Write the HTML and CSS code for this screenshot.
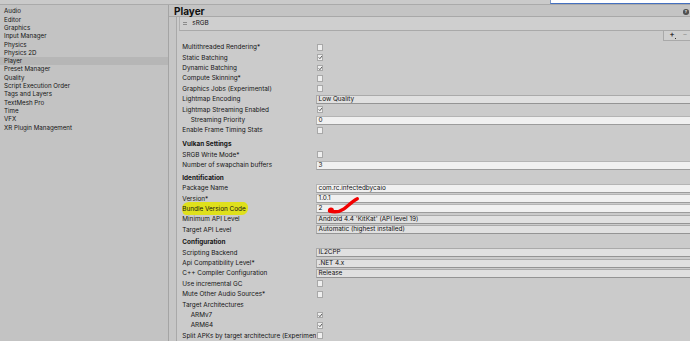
FILE: index.html
```html
<!DOCTYPE html>
<html>
<head>
<meta charset="utf-8">
<link rel="stylesheet" href="styles.css">
</head>
<body>
<div class="top"><div class="search"></div></div>
<div class="main">
  <aside class="side">
    <ul>
      <li>Audio</li>
      <li>Editor</li>
      <li>Graphics</li>
      <li>Input Manager</li>
      <li>Physics</li>
      <li>Physics 2D</li>
      <li class="sel">Player</li>
      <li>Preset Manager</li>
      <li>Quality</li>
      <li>Script Execution Order</li>
      <li>Tags and Layers</li>
      <li>TextMesh Pro</li>
      <li>Time</li>
      <li>VFX</li>
      <li>XR Plugin Management</li>
    </ul>
  </aside>
  <section class="insp">
    <header class="head"><h1>Player</h1><span class="help">?</span></header>
    <div class="body">
      <div class="gutter"></div>
      <div class="content">
        <div class="list"><span class="handle"></span>sRGB</div>
        <div class="listfoot"><span class="plus">+<i></i></span><span class="minus">−</span></div>
        <div class="props">
          <div class="row"><span class="lbl">Multithreaded Rendering*</span><span class="cb"></span></div>
          <div class="row"><span class="lbl">Static Batching</span><span class="cb"><svg viewBox="0 0 6 6"><polyline points="1.2,3.2 2.4,4.4 4.8,1.4"/></svg></span></div>
          <div class="row"><span class="lbl">Dynamic Batching</span><span class="cb"><svg viewBox="0 0 6 6"><polyline points="1.2,3.2 2.4,4.4 4.8,1.4"/></svg></span></div>
          <div class="row"><span class="lbl">Compute Skinning*</span><span class="cb"></span></div>
          <div class="row"><span class="lbl">Graphics Jobs (Experimental)</span><span class="cb"></span></div>
          <div class="row"><span class="lbl">Lightmap Encoding</span><span class="field drop">Low Quality</span></div>
          <div class="row"><span class="lbl">Lightmap Streaming Enabled</span><span class="cb"><svg viewBox="0 0 6 6"><polyline points="1.2,3.2 2.4,4.4 4.8,1.4"/></svg></span></div>
          <div class="row ind"><span class="lbl">Streaming Priority</span><span class="field">0</span></div>
          <div class="row"><span class="lbl">Enable Frame Timing Stats</span><span class="cb"></span></div>
          <div class="row sec big"><span class="lbl">Vulkan Settings</span></div>
          <div class="row"><span class="lbl">SRGB Write Mode*</span><span class="cb"></span></div>
          <div class="row"><span class="lbl">Number of swapchain buffers</span><span class="field">3</span></div>
          <div class="row sec"><span class="lbl">Identification</span></div>
          <div class="row"><span class="lbl">Package Name</span><span class="field">com.rc.infectedbycaio</span></div>
          <div class="row"><span class="lbl">Version*</span><span class="field">1.0.1</span></div>
          <div class="row mark"><span class="hl"></span><span class="lbl">Bundle Version Code</span><span class="field">2</span>
            <svg class="arrow" viewBox="0 0 34 18" width="34" height="18"><ellipse cx="4" cy="13.2" rx="2.9" ry="2.6"/><path d="M2.5 13.8 C7 15.5, 13 14.5, 17 11.8 S25 4.5, 30.3 1.8"/></svg>
          </div>
          <div class="row"><span class="lbl">Minimum API Level</span><span class="field drop">Android 4.4 'KitKat' (API level 19)</span></div>
          <div class="row"><span class="lbl">Target API Level</span><span class="field drop">Automatic (highest installed)</span></div>
          <div class="row sec"><span class="lbl">Configuration</span></div>
          <div class="row"><span class="lbl">Scripting Backend</span><span class="field drop">IL2CPP</span></div>
          <div class="row"><span class="lbl">Api Compatibility Level*</span><span class="field drop">.NET 4.x</span></div>
          <div class="row"><span class="lbl">C++ Compiler Configuration</span><span class="field drop">Release</span></div>
          <div class="row"><span class="lbl">Use incremental GC</span><span class="cb"></span></div>
          <div class="row"><span class="lbl">Mute Other Audio Sources*</span><span class="cb"></span></div>
          <div class="row"><span class="lbl">Target Architectures</span></div>
          <div class="row ind"><span class="lbl">ARMv7</span><span class="cb"><svg viewBox="0 0 6 6"><polyline points="1.2,3.2 2.4,4.4 4.8,1.4"/></svg></span></div>
          <div class="row ind"><span class="lbl">ARM64</span><span class="cb"><svg viewBox="0 0 6 6"><polyline points="1.2,3.2 2.4,4.4 4.8,1.4"/></svg></span></div>
          <div class="row"><span class="lbl">Split APKs by target architecture (Experimental)</span><span class="cb"></span></div>
        </div>
      </div>
    </div>
  </section>
</div>
</body>
</html>
```
FILE: styles.css
```css
* { box-sizing: border-box; }
html, body { margin: 0; padding: 0; }
body {
  width: 690px;
  height: 341px;
  overflow: hidden;
  font-family: Inter, "Noto Sans", sans-serif;
  color: #151515;
  background: #cbcbcb;
}
.top {
  height: 5px;
  background: #cacaca;
  border-bottom: 1px solid #aaaaaa;
  display: flex;
  justify-content: flex-end;
}
.search {
  width: 140px;
  height: 4px;
  background: #ffffff;
  border-left: 1px solid #7d97c4;
  border-bottom: 1px solid #4470c0;
}
.main {
  display: flex;
  height: 336px;
}
.side {
  width: 169px;
  flex: none;
  background: #c3c3c3;
  border-right: 1px solid #a4a4a4;
  padding-top: 2.2px;
}
.side ul { list-style: none; margin: 0; padding: 0; }
.side li {
  height: 8.33px;
  line-height: 8.33px;
  padding-left: 4px;
  font-size: 6.2px;
  white-space: nowrap;
}
.side li.sel { background: #b6b6b6; }
.insp {
  flex: 1;
  min-width: 0;
  display: flex;
  flex-direction: column;
}
.head {
  height: 12px;
  flex: none;
  background: #c4c4c4;
  border-bottom: 1px solid #a8a8a8;
  display: flex;
  align-items: center;
  justify-content: space-between;
  padding: 0 1.5px 0 5px;
}
.head h1 {
  margin: 0;
  font-size: 10px;
  font-weight: 700;
  line-height: 1;
  color: #111;
}
.help {
  width: 5.5px;
  height: 5.5px;
  border-radius: 50%;
  background: #505050;
  color: #e8e8e8;
  font-size: 4px;
  font-weight: 700;
  line-height: 5.5px;
  text-align: center;
  align-self: flex-end;
  margin-bottom: 1.5px;
}
.body {
  flex: 1;
  display: flex;
  min-height: 0;
}
.gutter {
  width: 8px;
  flex: none;
  background: #c6c6c6;
  border-right: 1px solid #a9a9a9;
}
.content {
  flex: 1;
  min-width: 0;
  display: flex;
  flex-direction: column;
  background: #cbcbcb;
}
.list {
  margin-left: 2px;
  height: 13.5px;
  flex: none;
  background: #cfcfcf;
  border-left: 1px solid #b0b0b0;
  border-bottom: 1px solid #a9a9a9;
  display: flex;
  align-items: center;
  padding-left: 3px;
  font-size: 6.4px;
}
.handle {
  width: 4px;
  height: 2.6px;
  border-top: 0.8px solid #8c8c8c;
  border-bottom: 0.8px solid #8c8c8c;
  margin-right: 5.3px;
}
.listfoot {
  align-self: flex-end;
  width: 27px;
  height: 10px;
  flex: none;
  background: #cfcfcf;
  border-left: 1px solid #a9a9a9;
  border-bottom: 1px solid #a9a9a9;
  display: flex;
  align-items: center;
  padding-left: 5.5px;
  gap: 8px;
  font-size: 7.5px;
  line-height: 1;
}
.plus { font-weight: 700; color: #333; position: relative; }
.plus i {
  position: absolute;
  right: -1.5px;
  bottom: 0;
  width: 1.2px;
  height: 1.2px;
  background: #333;
}
.minus { color: #8f8f8f; }
.props {
  margin-top: 1.6px;
  padding-left: 5.3px;
}
.row {
  display: grid;
  grid-template-columns: 133.7px 1fr;
  height: 10.4px;
  align-items: center;
  font-size: 6.4px;
  position: relative;
}
.lbl {
  white-space: nowrap;
  overflow: hidden;
  position: relative;
}
.ind .lbl { padding-left: 8.4px; }
.sec { font-weight: 700; margin-top: 2.2px; }
.sec.big { margin-top: 3.6px; }
.field {
  height: 9px;
  line-height: 7px;
  border: 1px solid #b4b4b4;
  border-right: none;
  border-bottom-color: #9c9c9c;
  padding-left: 1.6px;
  background: #f0f0f0;
  white-space: nowrap;
  overflow: hidden;
  margin-right: -6px;
  color: #111;
}
.field.drop {
  background: #e0e0e0;
  border-color: #aaaaaa;
  border-bottom-color: #949494;
}
.cb {
  width: 6.8px;
  height: 6.8px;
  margin-left: 0.7px;
  border: 1px solid #a8a8a8;
  background: #efefef;
  display: flex;
  align-items: center;
  justify-content: center;
}
.cb svg { width: 5px; height: 5px; display: block; }
.cb polyline { fill: none; stroke: #1d1d1d; stroke-width: 0.9; stroke-linecap: round; stroke-linejoin: round; }
.hl {
  position: absolute;
  left: -0.8px;
  top: -2.2px;
  width: 66.8px;
  height: 13.3px;
  background: #dfe01c;
  border-radius: 7px 5px 6px 4px / 6px 5px 7px 6px;
}
.arrow {
  position: absolute;
  left: 144.7px;
  top: -7px;
  overflow: visible;
}
.arrow path { fill: none; stroke: #f20000; stroke-width: 3.4; stroke-linecap: round; }
.arrow ellipse { fill: #f20000; }
```
